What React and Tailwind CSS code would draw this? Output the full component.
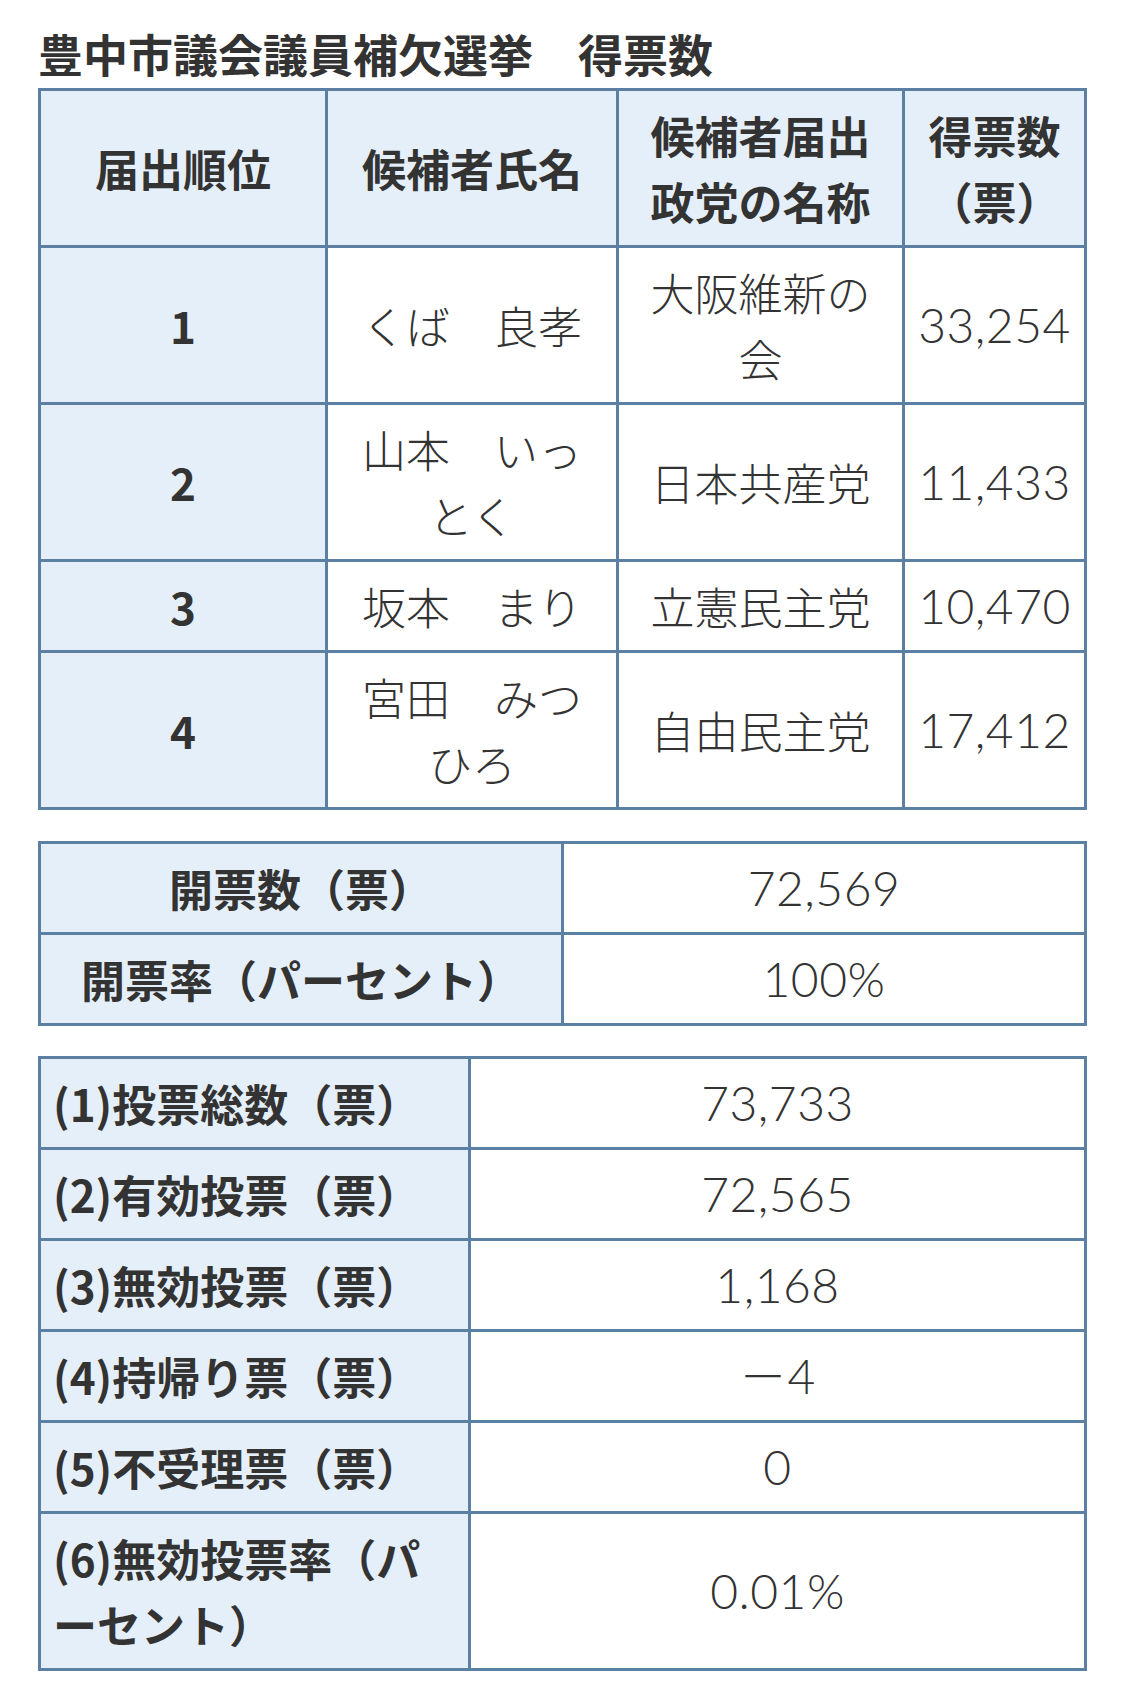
import React from 'react';

const candidates = [
  { order: '1', name: 'くば　良孝', party: '大阪維新の会', votes: '33,254' },
  { order: '2', name: '山本　いっとく', party: '日本共産党', votes: '11,433' },
  { order: '3', name: '坂本　まり', party: '立憲民主党', votes: '10,470' },
  { order: '4', name: '宮田　みつひろ', party: '自由民主党', votes: '17,412' },
];

const counts = [
  { label: '(1)投票総数（票）', value: '73,733' },
  { label: '(2)有効投票（票）', value: '72,565' },
  { label: '(3)無効投票（票）', value: '1,168' },
  { label: '(4)持帰り票（票）', value: '－4' },
  { label: '(5)不受理票（票）', value: '0' },
  { label: '(6)無効投票率（パーセント）', value: '0.01%' },
];

const th = 'border-[3px] border-[#5b80a3] bg-[#e5eff9] font-bold px-[14px] py-[11px] text-center align-middle';
const td = 'border-[3px] border-[#5b80a3] bg-white font-light px-[14px] py-[11px] text-center align-middle';
// digits in the reference are wider and lighter than the CJK font's
const num = 'border-[3px] border-[#5b80a3] bg-white px-[14px] py-[11px] text-center align-middle font-[Lato,"Noto_Sans_CJK_JP",sans-serif] font-light text-[48px] leading-[66px] tracking-[0.5px]';

export default function App() {
  return (
    <main className="min-h-screen bg-white text-[#333333] px-[38px] pt-[27px] pb-[24px] font-['Noto_Sans_CJK_JP','Noto_Sans',sans-serif]">
      <h2 className="text-[45px] leading-[1.2] font-bold mb-[7px]">豊中市議会議員補欠選挙　得票数</h2>

      <table className="w-full table-fixed border-collapse text-[44px] leading-[66px]">
        <colgroup>
          <col className="w-[287px]" />
          <col className="w-[291px]" />
          <col className="w-[286px]" />
          <col />
        </colgroup>
        <thead>
          <tr>
            <th className={th}>届出順位</th>
            <th className={th}>候補者氏名</th>
            <th className={th}>候補者届出政党の名称</th>
            <th className={th}>得票数（票）</th>
          </tr>
        </thead>
        <tbody>
          {candidates.map((c) => (
            <tr key={c.order}>
              <th className={th}>{c.order}</th>
              <td className={td}>{c.name}</td>
              <td className={td}>{c.party}</td>
              <td className={num + ' !px-[6px]'}>{c.votes}</td>
            </tr>
          ))}
        </tbody>
      </table>

      <table className="w-full table-fixed border-collapse text-[44px] leading-[66px] mt-[31px]">
        <tbody>
          <tr>
            <th className={th}>開票数（票）</th>
            <td className={num}>72,569</td>
          </tr>
          <tr>
            <th className={th}>開票率（パーセント）</th>
            <td className={num}>100%</td>
          </tr>
        </tbody>
      </table>

      <table className="w-full table-fixed border-collapse text-[44px] leading-[66px] mt-[30px]">
        <colgroup>
          <col className="w-[430px]" />
          <col />
        </colgroup>
        <tbody>
          {counts.map((r) => (
            <tr key={r.label}>
              <th className={th + ' !text-left !px-[12px]'}>{r.label}</th>
              <td className={num}>{r.value}</td>
            </tr>
          ))}
        </tbody>
      </table>
    </main>
  );
}
